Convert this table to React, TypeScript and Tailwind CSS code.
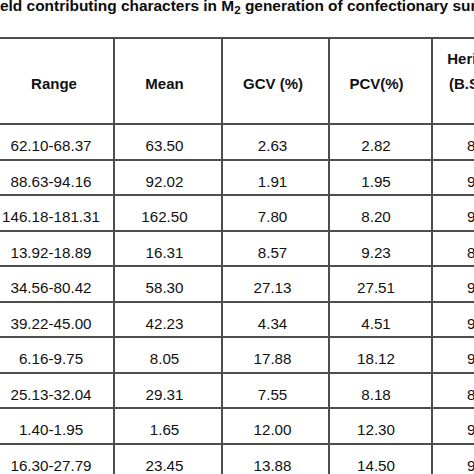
import React from "react";

const rows: string[][] = [
  ["62.10-68.37", "63.50", "2.63", "2.82", "86.98"],
  ["88.63-94.16", "92.02", "1.91", "1.95", "95.94"],
  ["146.18-181.31", "162.50", "7.80", "8.20", "90.48"],
  ["13.92-18.89", "16.31", "8.57", "9.23", "86.21"],
  ["34.56-80.42", "58.30", "27.13", "27.51", "97.26"],
  ["39.22-45.00", "42.23", "4.34", "4.51", "92.60"],
  ["6.16-9.75", "8.05", "17.88", "18.12", "97.37"],
  ["25.13-32.04", "29.31", "7.55", "8.18", "85.19"],
  ["1.40-1.95", "1.65", "12.00", "12.30", "95.18"],
  ["16.30-27.79", "23.45", "13.88", "14.50", "91.63"],
];

const widths = ["w-[115px]", "w-[108px]", "w-[107px]", "w-[103px]", "w-[106px]"];
const bodyPad = ["pr-[11px]", "pr-[7px]", "pr-[6px]", "pr-[9px]", "pr-0"];
const headPad = ["pr-[5px]", "pr-[7px]", "pr-[5px]", "pr-[8px]", "pr-0"];

export default function App() {
  return (
    <div
      className="w-[474px] h-[474px] overflow-hidden bg-white text-[#111] flex flex-col"
      style={{ fontFamily: '"Liberation Sans", Arial, sans-serif' }}
    >
      <div className="h-[37px] shrink-0">
        <div className="whitespace-nowrap font-bold text-[15.45px] leading-[11px] text-[#0d0d0d]">
          eld contributing characters in M<sub>2</sub> generation of confectionary sunflower
        </div>
      </div>
      <div className="w-[539px] shrink-0 border-t-2 border-[#4d4d4d]">
        <div className="flex h-[86px] border-b-2 border-[#4d4d4d] font-bold text-[15px] leading-[25.5px]">
          {["Range", "Mean", "GCV (%)", "PCV(%)", ""].map((h, i) => (
            <div
              key={i}
              className={`${widths[i]} ${headPad[i]} shrink-0 flex flex-col justify-end items-center pb-[26.5px] text-center ${
                i < 4 ? "border-r-2 border-[#4d4d4d]" : ""
              }`}
            >
              {i === 4 ? (
                <>
                  <span>Heritability</span>
                  <span>(B.S.) in %</span>
                </>
              ) : (
                <span>{h}</span>
              )}
            </div>
          ))}
        </div>
        {rows.map((r, ri) => (
          <div key={ri} className="flex h-[35.5px] border-b-2 border-[#4d4d4d] text-[15.2px] leading-[17px]">
            {r.map((c, ci) => (
              <div
                key={ci}
                className={`${widths[ci]} ${bodyPad[ci]} shrink-0 flex items-center justify-center pt-[8px] ${
                  ci < 4 ? "border-r-2 border-[#4d4d4d]" : ""
                }`}
              >
                {c}
              </div>
            ))}
          </div>
        ))}
      </div>
    </div>
  );
}
